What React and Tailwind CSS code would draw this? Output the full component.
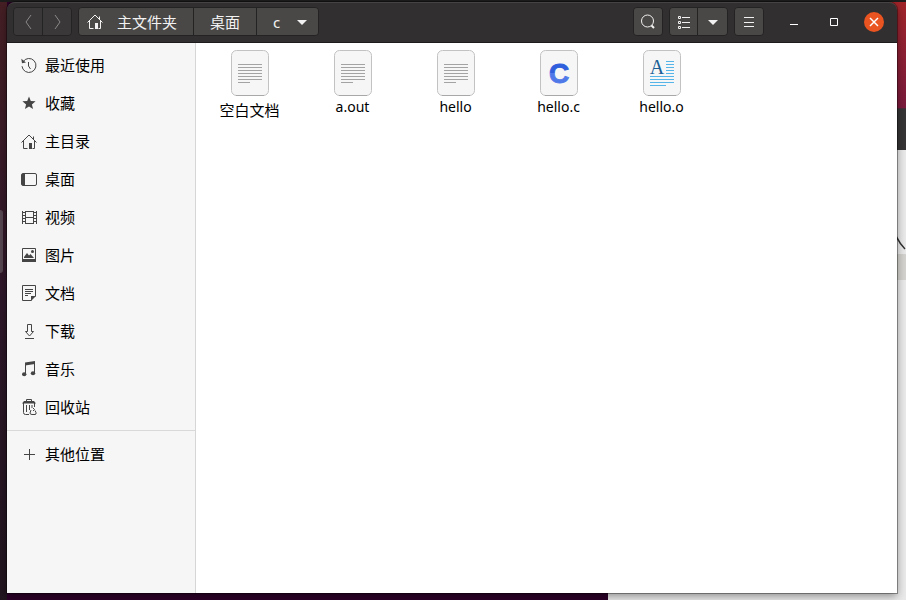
import React, { useState } from 'react';

const line = { fill: 'none', stroke: 'currentColor', strokeWidth: 1 };

const Icon = ({ children }) => (
  <svg viewBox="0 0 16 16" className="w-4 h-4 shrink-0 overflow-visible" aria-hidden="true">
    {children}
  </svg>
);

const HomeIcon = () => (
  <Icon>
    <path {...line} d="M0.5 8.5 8 1l7.5 7.5M2.5 7v7.5h4M13.5 7v7.5h-2M12.5 5V2.5" />
    <path fill="currentColor" d="M8 9h3v6H8z" />
  </Icon>
);

const RecentIcon = () => (
  <Icon>
    <path {...line} d="M2 3.8A7 7 0 1 1 1 8.2M7.5 4v4l2 3" />
    <path fill="currentColor" d="M0.3 0.8 1 5.2l4-.6z" />
  </Icon>
);

const StarIcon = () => (
  <Icon>
    <path fill="currentColor" d="m8 .5 1.8 4.4 4.8.4-3.7 3.1 1.2 4.7L8 10.6l-4.1 2.5 1.2-4.7-3.7-3.1 4.8-.4z" />
  </Icon>
);

const DesktopIcon = () => (
  <Icon>
    <rect {...line} x="0.5" y="1.5" width="15" height="12" rx="1.5" />
    <path fill="currentColor" d="M1 2h3v11H1z" />
  </Icon>
);

const VideoIcon = () => (
  <Icon>
    <path {...line} d="M1.5 1v13M15.5 1v13M4.5 1v13M12.5 1v13M4 1.5h9M4 7.5h9M4 13.5h9" />
    <path {...line} d="M2 2.5h2M2 5.5h2M2 8.5h2M2 11.5h2M13 2.5h2M13 5.5h2M13 8.5h2M13 11.5h2" />
  </Icon>
);

const PictureIcon = () => (
  <Icon>
    <path {...line} d="M1.5.5h13v13h-13z" />
    <path fill="currentColor" d="M1 11h14v3H1zM3 10V9l3-4 2 2.5L9.500 6 13 10z" />
    <circle cx="11.5" cy="3.5" r="1.5" fill="currentColor" />
  </Icon>
);

const DocumentIcon = () => (
  <Icon>
    <path {...line} d="M10.5 14.5h-9v-15h13v11M4 3.500h8M4 5.500h8M4 7.500h6M4 9.500h3" />
    <path fill="currentColor" d="M10 15v-5h5z" />
  </Icon>
);

const DownloadIcon = () => (
  <Icon>
    <path {...line} d="M6.5 7.5v-7h4v7h2l-4 4.5-4-4.5zM4 14.500h9" />
  </Icon>
);

const MusicIcon = () => (
  <Icon>
    <path {...line} d="M4.5 12V1M13.5 11V0" />
    <path fill="currentColor" d="M4 .5 14-1v3L4 3.500z" />
    <ellipse cx="3.2" cy="12.2" rx="2.2" ry="2" fill="currentColor" />
    <ellipse cx="12" cy="11.2" rx="2.2" ry="2" fill="currentColor" />
  </Icon>
);

const TrashIcon = () => (
  <Icon>
    <path {...line} d="M5.5 1V-.5h5V1M2.500 3v9.500q0 2 2 2H8M13.500 3v4M5.500 5v7M8.500 5v5M11 5v3" />
    <path fill="currentColor" d="M1 3.500 3 1h10l2 2.500z" />
    <path {...line} d="m12 8 1.5 1.500L12 11M10 10l-1 3q0 1.500 2 1.500h3q1.500 0 1-2l-1-2" />
  </Icon>
);

const PlusIcon = () => (
  <Icon>
    <path {...line} d="M8.5 2v11M3 7.500h11" />
  </Icon>
);

const SearchIcon = () => (
  <Icon>
    <circle {...line} cx="7.5" cy="7" r="6" />
    <path {...line} strokeWidth="2" d="m11.5 11.5 2.5 2.5" />
  </Icon>
);

const ListIcon = () => (
  <Icon>
    <path {...line} d="M2.5 2.5h2v2h-2zM2.500 7.500h2v2h-2zM2.500 12.500h2v2h-2zM6 3.500h8M6 8.500h8M6 13.500h8" />
  </Icon>
);

const MenuIcon = () => (
  <Icon>
    <path {...line} d="M3 3.500h10M3 8.500h10M3 12.500h10" />
  </Icon>
);

const CaretIcon = () => (
  <Icon>
    <path fill="currentColor" d="M3 6h10l-5 5z" />
  </Icon>
);

const places = [
  { name: '最近使用', icon: RecentIcon },
  { name: '收藏', icon: StarIcon },
  { name: '主目录', icon: HomeIcon },
  { name: '桌面', icon: DesktopIcon },
  { name: '视频', icon: VideoIcon },
  { name: '图片', icon: PictureIcon },
  { name: '文档', icon: DocumentIcon },
  { name: '下载', icon: DownloadIcon },
  { name: '音乐', icon: MusicIcon },
  { name: '回收站', icon: TrashIcon },
];

const files = [
  { name: '空白文档', type: 'text' },
  { name: 'a.out', type: 'text' },
  { name: 'hello', type: 'text' },
  { name: 'hello.c', type: 'c' },
  { name: 'hello.o', type: 'object' },
];

const FileIcon = ({ type }) => (
  <svg viewBox="0 0 38 46" className="w-[38px] h-[46px] shrink-0" aria-hidden="true">
    <rect x="0.5" y="0.5" width="37" height="45" rx="5" fill="#f6f6f6" stroke="#c2c2c2" />
    <path d="M5 45.5h28" stroke="#a8a8a8" />
    {type === 'text' && (
      <path d="M7 14.5h24M7 17.500h24M7 20.500h24M7 23.500h24M7 26.500h24M7 29.500h24M7 32.500h12" stroke="#a3a3a3" />
    )}
    {type === 'c' && (
      <>
        <linearGradient id="c-fill" x1="0" y1="0" x2="0" y2="1">
          <stop offset="0.5" stopColor="#2f5fdc" />
          <stop offset="0.5" stopColor="#4f79e8" />
        </linearGradient>
        <text
          x="19"
          y="33"
          textAnchor="middle"
          fill="url(#c-fill)"
          stroke="url(#c-fill)"
          className="font-['Liberation_Sans',sans-serif] font-bold text-[28px]"
        >
          C
        </text>
      </>
    )}
    {type === 'object' && (
      <>
        <path d="M23 11.5h8M23 14.500h8M23 17.500h8M23 20.500h8M23 23.500h8M7 26.500h24M7 29.500h24M7 32.500h24M7 35.500h16" stroke="#55b4e8" />
        <text x="14" y="24" textAnchor="middle" fill="#1c6196" className="font-['Liberation_Serif',serif] text-[20px]">A</text>
      </>
    )}
  </svg>
);

const group = 'flex h-[29px] rounded border border-[#242323] overflow-hidden divide-x divide-[#242323]';
const button = 'flex items-center bg-[#4a4846] text-[#f2f2f2] hover:bg-[#555351]';

const TitleBar = () => (
  <header className="flex items-center h-[41px] pl-1.5 pr-[13px] pb-0.5 shrink-0 rounded-t-lg border-t border-[#454343] border-b border-b-[#1d1b1b] bg-[#322f30]">
    <div className={group}>
      <button aria-label="后退" className="w-[29px] flex items-center justify-center bg-[#3a3838] text-[#8b8988]">
        <Icon><path {...line} d="m11 1-5 7 5 7" /></Icon>
      </button>
      <button aria-label="前进" className="w-7 flex items-center justify-center bg-[#3a3838] text-[#8b8988]">
        <Icon><path {...line} d="m6 1 5 7-5 7" /></Icon>
      </button>
    </div>
    <nav aria-label="路径" className={`${group} ml-1.5`}>
      <button className={`${button} w-[115px] gap-3.5 pl-2`}><HomeIcon />主文件夹</button>
      <button className={`${button} w-[63px] justify-center`}>桌面</button>
      <button className={`${button} w-[61px] justify-center gap-3.5 pl-2`}>c<CaretIcon /></button>
    </nav>
    <div className="grow" />
    <div className="flex gap-1.5">
      <div className={group}>
        <button aria-label="搜索" className={`${button} justify-center w-7`}><SearchIcon /></button>
      </div>
      <div className={group}>
        <button aria-label="列表视图" className={`${button} justify-center w-7`}><ListIcon /></button>
        <button aria-label="视图选项" className={`${button} justify-center w-[29px]`}><CaretIcon /></button>
      </div>
      <div className={group}>
        <button aria-label="菜单" className={`${button} justify-center w-7`}><MenuIcon /></button>
      </div>
    </div>
    <div className="flex items-center gap-5 ml-5 text-white">
      <button aria-label="最小化" className="w-5 h-5 flex items-center justify-center">
        <Icon><path {...line} d="M4 10.5h8" /></Icon>
      </button>
      <button aria-label="最大化" className="w-5 h-5 flex items-center justify-center">
        <Icon><path {...line} d="M4.5 4.5h7v7h-7z" /></Icon>
      </button>
      <button aria-label="关闭" className="w-5 h-5 flex items-center justify-center rounded-full bg-[#e95420]">
        <Icon><path {...line} strokeWidth="1.5" d="m4 4 8 8M12 4l-8 8" /></Icon>
      </button>
    </div>
  </header>
);

const Place = ({ name, icon: PlaceIcon }) => (
  <button className="flex items-center w-full h-[38px] gap-2 pl-3.5 text-[#454545] hover:bg-[#ececec]">
    <PlaceIcon />
    <span className="pb-0.5 text-black">{name}</span>
  </button>
);

// The desktop and the other windows that show round the edges
const Backdrop = () => (
  <div className="absolute inset-0 overflow-hidden bg-[#2c0029]" aria-hidden="true">
    <div className="absolute left-0 inset-y-0 w-[7px] bg-linear-to-b from-[#451f24] via-[#2d1729] to-[#21151f]" />
    <div className="absolute left-0 top-[210px] w-[3px] h-[63px] rounded-r bg-[#55464f]" />
    <div className="absolute right-0 top-0 w-20 h-[108px] bg-linear-to-b from-[#a12528] to-[#7a1a3c]" />
    <div className="absolute left-[608px] right-0 top-[108px] bottom-0 bg-[#e9e9e9]">
      <div className="h-[42px] border-t border-[#4c2939] bg-[#363434]" />
      <div className="absolute inset-x-0 top-[146px] h-[26px] bg-[#d3d2ce]" />
      <svg viewBox="0 0 10 16" className="absolute right-0 top-[128px] w-2.5 h-4">
        <path d="M0 0q4 8 9 13" fill="none" stroke="#303030" strokeWidth="1.5" />
      </svg>
    </div>
    <div className="absolute inset-x-0 top-0 h-0.5 bg-[#1d1d1d]" />
  </div>
);

const App = () => {
  const [selected, setSelected] = useState(null);

  return (
    <div className="relative flex h-screen pt-0.5 pr-[9px] pb-[7px] pl-[7px] text-[15px] leading-5 font-['Noto_Sans','Noto_Sans_CJK_SC',sans-serif]">
      <Backdrop />
      <div className="relative flex flex-col grow min-w-0 rounded-t-lg shadow-[0_0_0_1px_rgba(0,0,0,0.35),0_3px_9px_rgba(0,0,0,0.4)]">
        <TitleBar />
        <div className="flex grow min-h-0">
          <aside className="w-[189px] shrink-0 pt-1 border-r border-[#d6d6d6] bg-[#f6f6f6]">
            {places.map((place) => <Place key={place.name} {...place} />)}
            <div className="mt-[3px] mb-[5px] border-t border-[#d9d9d9]" />
            <Place name="其他位置" icon={PlusIcon} />
          </aside>
          <main className="flex flex-wrap content-start grow min-w-0 pl-0.5 pt-[7px] bg-white">
            {files.map((file) => (
              <button
                key={file.name}
                onClick={() => setSelected(file.name)}
                className={`flex flex-col items-center w-[103px] text-black ${selected === file.name ? 'bg-orange-100' : ''}`}
              >
                <FileIcon type={file.type} />
                <span className={file.name === '空白文档' ? 'mt-1' : 'mt-px text-[14px]'}>{file.name}</span>
              </button>
            ))}
          </main>
        </div>
      </div>
    </div>
  );
};

export default App;
